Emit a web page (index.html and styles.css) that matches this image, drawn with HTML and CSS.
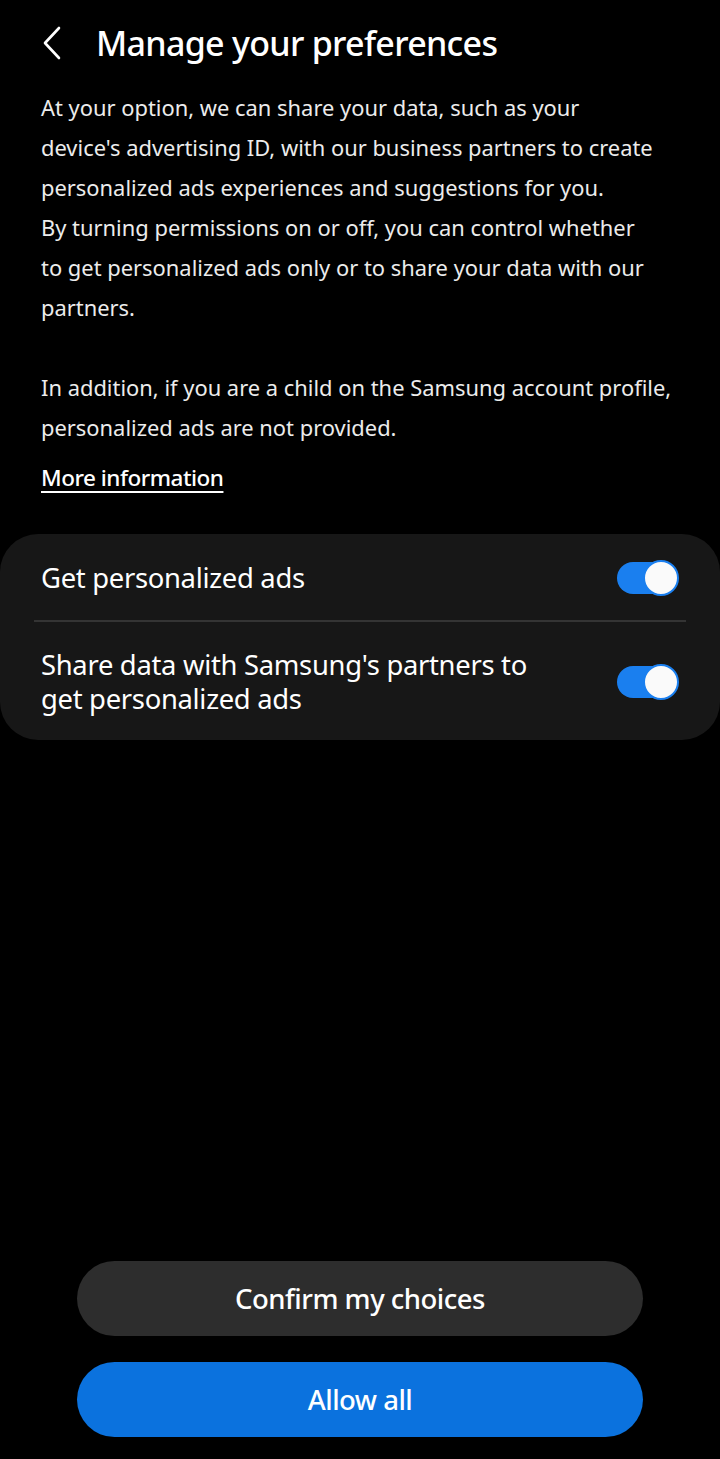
FILE: index.html
```html
<!DOCTYPE html>
<html lang="en">
<head>
<meta charset="utf-8">
<title>Manage your preferences</title>
<link rel="stylesheet" href="styles.css">
</head>
<body>
<div class="screen">
  <header class="topbar">
    <button class="back" aria-label="Back">
      <svg width="22" height="34" viewBox="0 0 22 34" fill="none">
        <path d="M18 2 L4 17 L18 32" stroke="#fff" stroke-width="2.6" stroke-linecap="round" stroke-linejoin="round"/>
      </svg>
    </button>
    <h1 class="title">Manage your preferences</h1>
  </header>

  <section class="intro">
    <p>At your option, we can share your data, such as your<br>device's advertising ID, with our business partners to create<br>personalized ads experiences and suggestions for you.<br>By turning permissions on or off, you can control whether<br>to get personalized ads only or to share your data with our<br>partners.</p>
    <p>In addition, if you are a child on the Samsung account profile,<br>personalized ads are not provided.</p>
    <a class="more" href="#">More information</a>
  </section>

  <section class="card">
    <div class="row">
      <span class="label">Get personalized ads</span>
      <span class="switch on"><span class="thumb"></span></span>
    </div>
    <div class="divider"></div>
    <div class="row">
      <span class="label">Share data with Samsung's partners to get personalized ads</span>
      <span class="switch on"><span class="thumb"></span></span>
    </div>
  </section>

  <div class="spacer"></div>

  <footer class="actions">
    <button class="btn btn-dark">Confirm my choices</button>
    <button class="btn btn-blue">Allow all</button>
  </footer>
</div>
</body>
</html>
```

FILE: styles.css
```css
* { box-sizing: border-box; }

html, body {
  margin: 0;
  padding: 0;
  background: #000;
  color: #f5f5f5;
  font-family: "Noto Sans", "Open Sans", sans-serif;
}

.screen {
  width: 720px;
  height: 1459px;
  display: flex;
  flex-direction: column;
}

.topbar {
  display: flex;
  align-items: center;
  height: 88px;
  padding-left: 40px;
  padding-bottom: 2px;
}

.back {
  background: none;
  border: 0;
  padding: 0;
  width: 24px;
  height: 36px;
  display: flex;
  align-items: center;
  justify-content: center;
  margin-right: 32px;
}

.title {
  margin: 0;
  font-size: 34px;
  font-weight: 500;
  letter-spacing: -0.7px;
  color: #fff;
}

.intro {
  padding: 0 20px 0 41px;
  font-size: 21.9px;
  line-height: 40px;
  color: #ececec;
  white-space: nowrap;
}

.intro p {
  margin: 0 0 40px;
}

.intro p + p {
  margin-bottom: 10px;
}

.more {
  display: inline-block;
  color: #fff;
  font-weight: 500;
  font-size: 22.5px;
  line-height: 40px;
  letter-spacing: -0.5px;
  text-decoration: underline;
  text-underline-offset: 5px;
  text-decoration-thickness: 2px;
}

.card {
  margin-top: 36px;
  background: #171717;
  border-radius: 38px;
  padding: 0 34px;
}

.row {
  display: flex;
  align-items: center;
  justify-content: space-between;
  padding: 2px 7px 0 7px;
  min-height: 86px;
}

.row + .divider + .row {
  min-height: 118px;
  padding-top: 2px;
}

.label {
  font-size: 27.4px;
  line-height: 34px;
  color: #fff;
  letter-spacing: -0.3px;
  max-width: 500px;
}

.divider {
  height: 2px;
  background: #343434;
}

.switch {
  position: relative;
  width: 60px;
  height: 32px;
  border-radius: 16px;
  background: #1a7fef;
  flex: none;
  margin-right: 2px;
}

.switch .thumb {
  position: absolute;
  right: -2px;
  top: -2px;
  width: 36px;
  height: 36px;
  border-radius: 50%;
  background: #fafafa;
  border: 2px solid #1a7fef;
}

.spacer { flex: 1; }

.actions {
  display: flex;
  flex-direction: column;
  align-items: center;
  gap: 26px;
  padding-bottom: 22px;
}

.btn {
  width: 566px;
  height: 75px;
  border: 0;
  border-radius: 38px;
  font-family: inherit;
  font-size: 27.5px;
  font-weight: 500;
  letter-spacing: -0.5px;
  color: #fff;
}

.btn-dark { background: #2d2d2d; }
.btn-blue { background: #0b72de; }
```
